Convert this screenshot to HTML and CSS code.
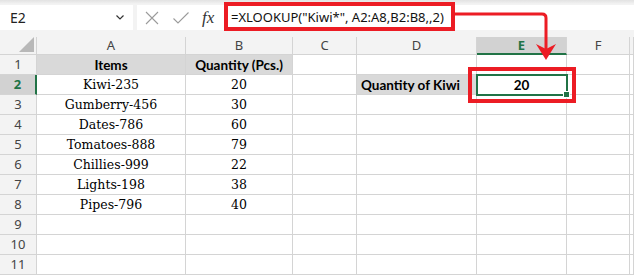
FILE: index.html
```html
<!DOCTYPE html>
<html lang="en">
<head>
  <meta charset="UTF-8">
  <meta name="viewport" content="width=device-width, initial-scale=1">
  <title>XLOOKUP wildcard</title>
  <link rel="stylesheet" href="styles.css">
</head>
<body>
  <!-- Formula bar -->
  <div class="toolbar">
    <div class="namebox">
      <span>E2</span>
      <svg class="chevron" width="8" height="5" viewBox="0 0 8 5"><path d="M0.5 0.5 L4 4 L7.5 0.5" fill="none" stroke="#333" stroke-width="1.2"/></svg>
    </div>
    <div class="fxbox">
      <svg width="14" height="14" viewBox="0 0 14 14"><path d="M1 1 L13 13 M13 1 L1 13" stroke="#9b9b9b" stroke-width="1.1"/></svg>
      <svg width="16" height="14" viewBox="0 0 16 14"><path d="M0.5 7.5 L5 12 L15.5 1.5" fill="none" stroke="#9b9b9b" stroke-width="1.1"/></svg>
      <span class="fx">fx</span>
    </div>
    <div class="formula">=XLOOKUP("Kiwi*", A2:A8,B2:B8,,2)</div>
  </div>

  <!-- Sheet grid -->
  <div class="sheet">
    <div class="corner"></div>
    <div class="colhead">A</div>
    <div class="colhead">B</div>
    <div class="colhead">C</div>
    <div class="colhead">D</div>
    <div class="colhead active">E</div>
    <div class="colhead">F</div>
    <div class="colhead"></div>

    <div class="rowhead">1</div>
    <div class="cell head">Items</div>
    <div class="cell head">Quantity (Pcs.)</div>
    <div class="cell"></div><div class="cell"></div><div class="cell"></div><div class="cell"></div><div class="cell"></div>

    <div class="rowhead active">2</div>
    <div class="cell data">Kiwi-235</div>
    <div class="cell data">20</div>
    <div class="cell"></div>
    <div class="cell label">Quantity of Kiwi</div>
    <div class="cell result">20</div>
    <div class="cell"></div><div class="cell"></div>

    <div class="rowhead">3</div>
    <div class="cell data">Gumberry-456</div>
    <div class="cell data">30</div>
    <div class="cell"></div><div class="cell"></div><div class="cell"></div><div class="cell"></div><div class="cell"></div>

    <div class="rowhead">4</div>
    <div class="cell data">Dates-786</div>
    <div class="cell data">60</div>
    <div class="cell"></div><div class="cell"></div><div class="cell"></div><div class="cell"></div><div class="cell"></div>

    <div class="rowhead">5</div>
    <div class="cell data">Tomatoes-888</div>
    <div class="cell data">79</div>
    <div class="cell"></div><div class="cell"></div><div class="cell"></div><div class="cell"></div><div class="cell"></div>

    <div class="rowhead">6</div>
    <div class="cell data">Chillies-999</div>
    <div class="cell data">22</div>
    <div class="cell"></div><div class="cell"></div><div class="cell"></div><div class="cell"></div><div class="cell"></div>

    <div class="rowhead">7</div>
    <div class="cell data">Lights-198</div>
    <div class="cell data">38</div>
    <div class="cell"></div><div class="cell"></div><div class="cell"></div><div class="cell"></div><div class="cell"></div>

    <div class="rowhead">8</div>
    <div class="cell data">Pipes-796</div>
    <div class="cell data">40</div>
    <div class="cell"></div><div class="cell"></div><div class="cell"></div><div class="cell"></div><div class="cell"></div>

    <div class="rowhead">9</div>
    <div class="cell"></div><div class="cell"></div><div class="cell"></div><div class="cell"></div><div class="cell"></div><div class="cell"></div><div class="cell"></div>

    <div class="rowhead">10</div>
    <div class="cell"></div><div class="cell"></div><div class="cell"></div><div class="cell"></div><div class="cell"></div><div class="cell"></div><div class="cell"></div>

    <div class="rowhead">11</div>
    <div class="cell"></div><div class="cell"></div><div class="cell"></div><div class="cell"></div><div class="cell"></div><div class="cell"></div><div class="cell"></div>
  </div>

  <!-- Selection and annotations drawn over the sheet -->
  <div class="selection"><span class="handle"></span></div>
  <div class="mark mark-formula"></div>
  <div class="mark mark-cell"></div>
  <svg class="arrow" width="634" height="279" viewBox="0 0 634 279">
    <path d="M455 14 H542 Q546 14 546 18 V50" fill="none" stroke="#ec1c24" stroke-width="3"/>
    <polygon points="536,44 546,49 556,44 546,60" fill="#ec1c24"/>
  </svg>
</body>
</html>
```

FILE: styles.css
```css
body {
  margin: 0;
  width: 634px;
  height: 279px;
  overflow: hidden;
  position: relative;
  background: #fff;
  font-family: "Noto Sans", sans-serif;
  color: #000;
}

/* formula bar */
.toolbar {
  display: flex;
  height: 37px;
  box-sizing: border-box;
  padding: 5px 0 7px;
  background: linear-gradient(#e2e2e2, #f3f3f3 4px);
}
.namebox {
  width: 133px;
  box-sizing: border-box;
  padding: 0 9px 0 10px;
  background: #fff;
  display: flex;
  align-items: center;
  justify-content: space-between;
  font-size: 14px;
  color: #222;
}
.fxbox {
  width: 87px;
  margin-left: 4px;
  padding-left: 8px;
  box-sizing: border-box;
  background: #fff;
  display: flex;
  align-items: center;
  gap: 14px;
}
.fx {
  font-family: "Liberation Serif", serif;
  font-style: italic;
  font-size: 17px;
  color: #333;
  margin-left: -1px;
}
.formula {
  flex: 1;
  background: #fff;
  border-left: 1px solid #dcdcdc;
  padding-left: 6px;
  font-size: 13px;
  line-height: 25px;
  color: #111;
  white-space: nowrap;
}

/* sheet */
.sheet {
  display: grid;
  grid-template-columns: 37px 149px 107px 64px 120px 90px 63px 4px;
  grid-template-rows: 18px repeat(11, 20px);
}
.sheet > div {
  box-sizing: border-box;
  border-right: 1px solid #d4d4d4;
  border-bottom: 1px solid #d4d4d4;
}
.corner {
  background: #f3f3f3;
  position: relative;
}
.corner::after {
  content: "";
  position: absolute;
  right: 2px;
  bottom: 2px;
  width: 15px;
  height: 15px;
  background: #b8b8b8;
  clip-path: polygon(100% 0, 100% 100%, 0 100%);
}
.colhead {
  background: #f3f3f3;
  font-size: 13px;
  line-height: 17px;
  text-align: center;
  color: #444;
}
.colhead.active {
  background: #d2d2d2;
  color: #217346;
  font-weight: bold;
  border-bottom: 2px solid #217346;
}
.rowhead {
  background: #f3f3f3;
  font-size: 13px;
  line-height: 19px;
  text-align: center;
  color: #444;
}
.rowhead.active {
  background: #d2d2d2;
  color: #217346;
  font-weight: bold;
  border-right: 2px solid #217346;
}
.cell {
  line-height: 20px;
  text-align: center;
  white-space: nowrap;
  overflow: hidden;
}
.cell.head,
.cell.label,
.cell.result {
  font-family: Lato, sans-serif;
  font-weight: bold;
  font-size: 13.5px;
}
.cell.head {
  background: #d9d9d9;
}
.cell.data {
  font-family: "DejaVu Serif", serif;
  font-size: 12.5px;
}
.cell.label {
  background: #d9d9d9;
  text-align: left;
  padding-left: 4px;
}

/* active cell outline */
.selection {
  position: absolute;
  left: 476px;
  top: 74px;
  width: 92px;
  height: 22px;
  box-sizing: border-box;
  border: 2px solid #217346;
}
.handle {
  position: absolute;
  right: -4px;
  bottom: -4px;
  width: 5px;
  height: 5px;
  background: #217346;
  border: 1px solid #fff;
}

/* red annotation boxes */
.mark {
  position: absolute;
  box-sizing: border-box;
  border: 4px solid #ec1c24;
}
.mark-formula {
  left: 224px;
  top: 2px;
  width: 231px;
  height: 29px;
}
.mark-cell {
  left: 468px;
  top: 67px;
  width: 108px;
  height: 36px;
}
.arrow {
  position: absolute;
  left: 0;
  top: 0;
  pointer-events: none;
}
```
